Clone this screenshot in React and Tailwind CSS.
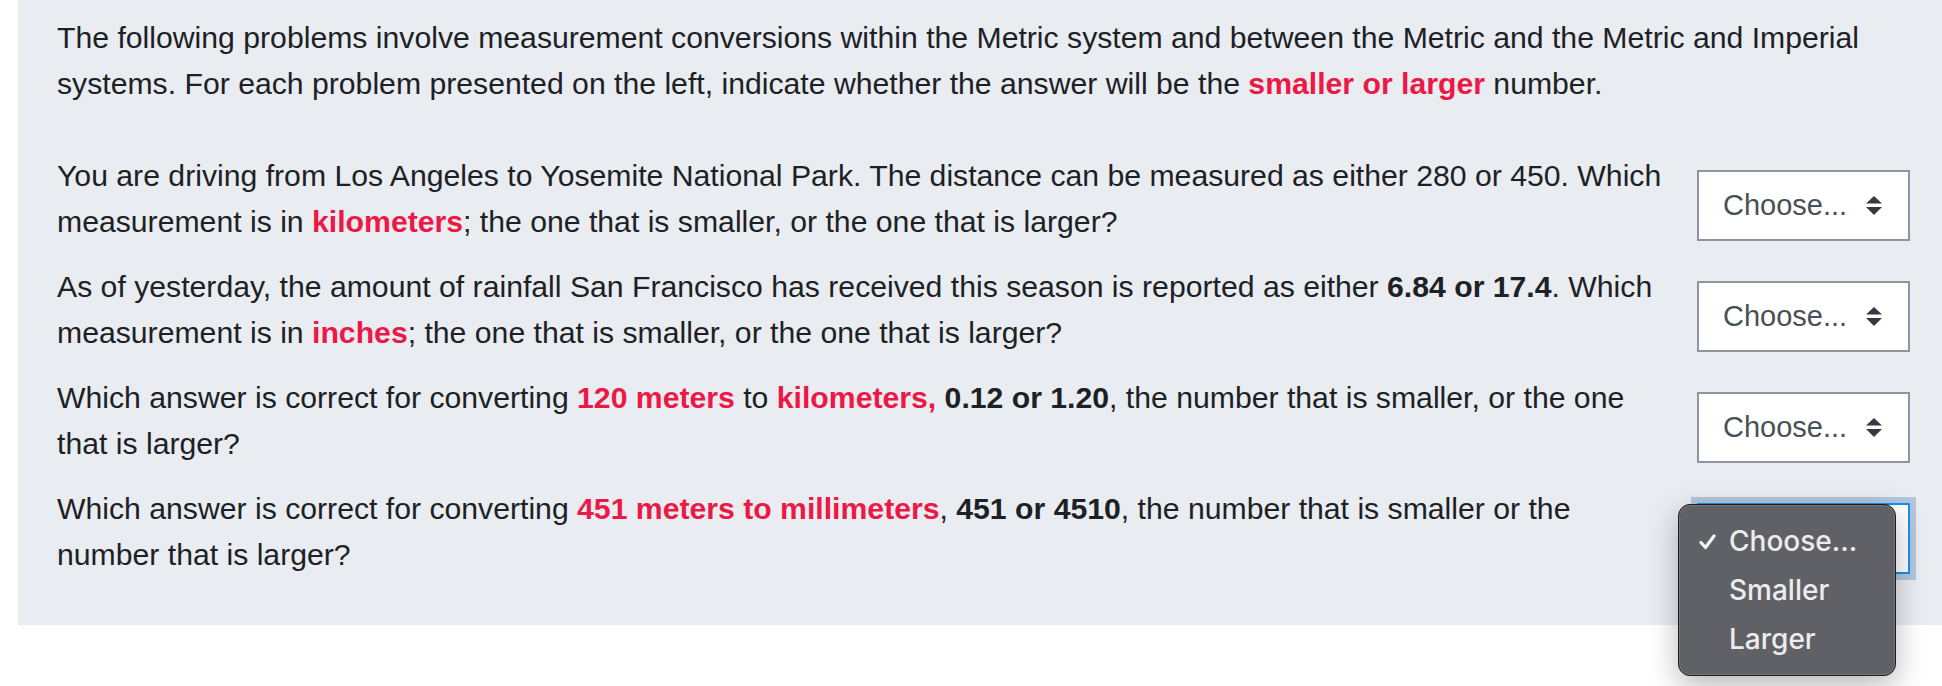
import React from "react";

const R = ({ children }) => (
  <strong className="font-bold text-[#ec1846]">{children}</strong>
);
const B = ({ children }) => <strong className="font-bold">{children}</strong>;

function Arrows() {
  return (
    <svg width="16" height="19" viewBox="0 0 16 19" className="shrink-0">
      <path d="M8 0 L16 7.5 L0 7.5 Z" fill="#343a40" />
      <path d="M0 11 L16 11 L8 19 Z" fill="#343a40" />
    </svg>
  );
}

function Select({ focused = false, open = false }) {
  return (
    <div className="relative mt-[17px] shrink-0">
      <div
        className={
          focused
            ? "w-[213px] h-[71px] bg-white border-2 border-[#1193f3] ring-[6px] ring-[#b3c6dd] flex items-center pl-[24px]"
            : "w-[213px] h-[71px] bg-white border-2 border-[#8f959e] flex items-center pl-[24px]"
        }
      >
        {!open && (
          <>
            <span className="text-[29px] text-[#495057] leading-none">Choose...</span>
            <span className="ml-[19px]">
              <Arrows />
            </span>
          </>
        )}
      </div>
      {open && (
        <div
          className="absolute left-[-19px] top-[1px] w-[218px] h-[172px] rounded-[12px] bg-[#5f6166] border border-[#1c1c1e] shadow-[inset_0_0_0_1px_#75777b,0_10px_30px_rgba(0,0,0,0.28)] pt-[12px] text-[28px] leading-[49px] text-[#ececec] font-medium z-10"
          style={{ fontFamily: "Inter, 'Noto Sans', sans-serif" }}
        >
          <div className="flex items-center pl-[20px]">
            <span className="w-[30px] flex items-center">
              <svg width="17" height="16" viewBox="0 0 17 16">
                <path
                  d="M2 8.5 L6.5 13.5 L15 2"
                  fill="none"
                  stroke="#f4f4f4"
                  strokeWidth="3.2"
                  strokeLinecap="round"
                  strokeLinejoin="round"
                />
              </svg>
            </span>
            <span>Choose...</span>
          </div>
          <div className="pl-[50px]">Smaller</div>
          <div className="pl-[50px]">Larger</div>
        </div>
      )}
    </div>
  );
}

function Row({ children, focused, open }) {
  return (
    <div className="flex items-start">
      <div className="w-[1640px] shrink-0">{children}</div>
      <Select focused={focused} open={open} />
    </div>
  );
}

export default function App() {
  return (
    <div
      className="w-[1942px] h-[686px] bg-white overflow-hidden text-[#1d2125]"
      style={{ fontFamily: "'Liberation Sans', Arial, sans-serif" }}
    >
      <div className="ml-[18px] h-[625px] bg-[#e9ecf1] pt-[15px] pl-[39px] text-[30.2px] leading-[46px]">
        <p className="whitespace-nowrap">
          The following problems involve measurement conversions within the Metric system and between the Metric and the Metric and Imperial
          <br />
          systems. For each problem presented on the left, indicate whether the answer will be the{" "}
          <R>smaller or larger</R> number.
        </p>
        <div className="mt-[46px] flex flex-col gap-[19px]">
          <Row>
            You are driving from Los Angeles to Yosemite National Park. The distance can be measured as either 280 or 450. Which
            <br />
            measurement is in <R>kilometers</R>; the one that is smaller, or the one that is larger?
          </Row>
          <Row>
            As of yesterday, the amount of rainfall San Francisco has received this season is reported as either{" "}
            <B>6.84 or 17.4</B>. Which
            <br />
            measurement is in <R>inches</R>; the one that is smaller, or the one that is larger?
          </Row>
          <Row>
            Which answer is correct for converting <R>120 meters</R> to <R>kilometers,</R> <B>0.12 or 1.20</B>, the number that is smaller, or the one
            <br />
            that is larger?
          </Row>
          <Row focused open>
            Which answer is correct for converting <R>451 meters to millimeters</R>, <B>451 or 4510</B>, the number that is smaller or the
            <br />
            number that is larger?
          </Row>
        </div>
      </div>
    </div>
  );
}
